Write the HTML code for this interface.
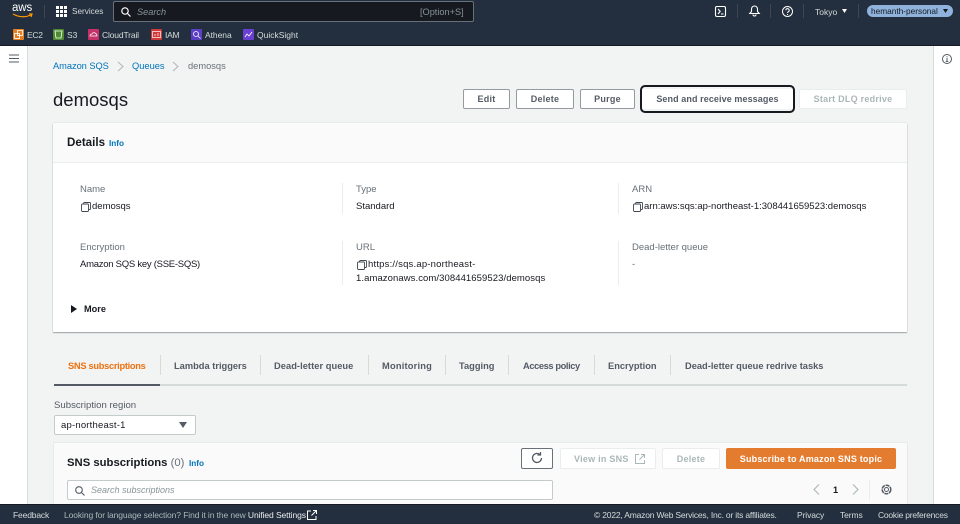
<!DOCTYPE html>
<html><head><meta charset="utf-8"><style>
html,body{margin:0;padding:0;width:960px;height:524px;overflow:hidden;background:#f2f3f3}
body{position:relative;font-family:"Liberation Sans",sans-serif;font-size:9px;color:#16191f}
#r{position:absolute;left:0;top:0;width:960px;height:524px;overflow:hidden;filter:blur(.3px)}
.a,.t{position:absolute}
.t{white-space:nowrap;line-height:12px}
.b{font-weight:700}
.g{color:#687078}.l{color:#0073bb}.w{color:#d5dbdb}
.v{font-size:9.500px}
.btn{position:absolute;box-sizing:border-box;border:1px solid #939ba0;border-radius:2px;background:#fff;color:#545b64;font-weight:700;font-size:9px;text-align:center;letter-spacing:.25px;white-space:nowrap}
.dis{border-color:#eaeded;color:#aab7b8}
.sep{position:absolute;width:1px;background:#d5dbdb}
.ic{position:absolute;width:11px;height:11px;border-radius:1px}
.tb{font-weight:700;font-size:9.300px;color:#545b64;top:360px}
svg{position:absolute;overflow:visible}
</style></head><body><div id="r">
<div class="a" style="left:0;top:0;width:960px;height:45px;background:#232f3e;border-bottom:1px solid #16191f"></div>
<div class="t" style="left:12px;top:2px;color:#fff;font-size:11.500px;letter-spacing:-.1px">aws</div>
<svg style="left:12px;top:13px" width="22" height="6" fill="none"><path d="M1 1q9 5 18 1M17 1l3 0-1 3" stroke="#f90" stroke-width="1.200"/></svg>
<div class="sep" style="left:44px;top:5px;height:13px;background:#414750"></div>
<svg style="left:56px;top:6px" width="11" height="11" fill="#fff"><rect width="3" height="3"/><rect x="4" width="3" height="3"/><rect x="8" width="3" height="3"/><rect y="4" width="3" height="3"/><rect x="4" y="4" width="3" height="3"/><rect x="8" y="4" width="3" height="3"/><rect y="8" width="3" height="3"/><rect x="4" y="8" width="3" height="3"/><rect x="8" y="8" width="3" height="3"/></svg>
<div class="t w" style="left:72px;top:6px;font-size:8.200px">Services</div>
<div class="a" style="left:113px;top:1px;width:359px;height:19px;background:#16191f;border:1px solid #687078;border-radius:2px"></div>
<svg style="left:121px;top:7px" width="10" height="10" fill="none" stroke="#fff" stroke-width="1.200"><circle cx="4" cy="4" r="3.200"/><path d="M6.500 6.500L9.500 9.500"/></svg>
<div class="t" style="left:137px;top:6px;color:#879596;font-style:italic;font-size:9.200px">Search</div>
<div class="t" style="left:420px;top:6px;color:#879596;font-size:9.200px">[Option+S]</div>

<div class="ic" style="left:13px;top:29px;background:#e67e22"></div>
<svg style="left:14px;top:30px" width="9" height="9" fill="none" stroke="#fff" stroke-width=".8"><rect x="3.500" y=".5" width="5" height="5"/><rect x=".5" y="3.500" width="5" height="5"/></svg>
<div class="t w" style="left:27px;top:29px;font-size:8.500px;letter-spacing:-.25px">EC2</div>
<div class="ic" style="left:53px;top:29px;background:#4d8b31"></div>
<svg style="left:54px;top:30px" width="9" height="9" fill="none" stroke="#fff" stroke-width=".8"><path d="M1 1h7l-1 7H2z"/></svg>
<div class="t w" style="left:67px;top:29px;font-size:8.500px">S3</div>
<div class="ic" style="left:88px;top:29px;background:#c7316a"></div>
<svg style="left:89px;top:30px" width="9" height="9" fill="none" stroke="#fff" stroke-width=".7"><path d="M1 6q0-2 2-2 1-2 3-1 2 1 2 3z"/></svg>
<div class="t w" style="left:102px;top:29px;font-size:8.500px;letter-spacing:-.15px">CloudTrail</div>
<div class="ic" style="left:151px;top:29px;background:#d13a3a"></div>
<svg style="left:152px;top:31px" width="9" height="7" fill="none" stroke="#fff" stroke-width=".7"><rect x=".5" y=".5" width="8" height="6"/><path d="M2 4h2M6 2v3"/></svg>
<div class="t w" style="left:165px;top:29px;font-size:8.500px;letter-spacing:-.25px">IAM</div>
<div class="ic" style="left:191px;top:29px;background:#5b3fc4"></div>
<svg style="left:192px;top:30px" width="9" height="9" fill="none" stroke="#fff" stroke-width=".8"><circle cx="4" cy="4" r="2.500"/><path d="M6 6l2.500 2.500"/></svg>
<div class="t w" style="left:205px;top:29px;font-size:8.500px;letter-spacing:-.05px">Athena</div>
<div class="ic" style="left:243px;top:29px;background:#6a3fd1"></div>
<svg style="left:244px;top:30px" width="9" height="9" fill="none" stroke="#fff" stroke-width=".8"><path d="M1 7l2-3 2 2 3-4"/></svg>
<div class="t w" style="left:257px;top:29px;font-size:8.500px">QuickSight</div>

<svg style="left:715px;top:6px" width="11" height="11" fill="none" stroke="#fff" stroke-width="1.100"><rect x=".5" y=".5" width="10" height="10" rx="1.500"/><path d="M3 3l2.200 2.400L3 8M6 8h2.500"/></svg>
<div class="sep" style="left:737px;top:4px;height:14px;background:#414750"></div>
<svg style="left:749px;top:5px" width="11" height="12" fill="none" stroke="#fff" stroke-width="1.100"><path d="M.8 8.500h9.400L8.500 6.500V4a3 3 0 0 0-6 0v2.500zM4 9.500a1.500 1.500 0 0 0 3 0"/></svg>
<div class="sep" style="left:770px;top:4px;height:14px;background:#414750"></div>
<svg style="left:782px;top:6px" width="11" height="11" fill="none" stroke="#fff" stroke-width="1"><circle cx="5.500" cy="5.500" r="5"/><path d="M3.800 4.300a1.700 1.700 0 1 1 2.500 1.500c-.6.300-.8.700-.8 1.200M5.500 8v1"/></svg>
<div class="sep" style="left:803px;top:4px;height:14px;background:#414750"></div>
<div class="t w" style="left:815px;top:6px;font-size:8.500px">Tokyo</div>
<svg style="left:842px;top:9px" width="5" height="4"><path d="M0 0h5L2.500 4z" fill="#fff"/></svg>
<div class="sep" style="left:858px;top:4px;height:14px;background:#414750"></div>
<div class="a" style="left:867px;top:5px;width:86px;height:12px;background:#8fb3dc;border-radius:6px"></div>
<div class="t" style="left:871px;top:5px;font-size:8.300px;color:#16191f">hemanth-personal</div>
<svg style="left:943px;top:9px" width="5" height="4"><path d="M0 0h5L2.500 4z" fill="#16191f"/></svg>

<div class="a" style="left:0;top:46px;width:27px;height:459px;background:#fff;border-right:1px solid #d5dbdb"></div>
<svg style="left:9px;top:54px" width="10" height="9" stroke="#545b64" stroke-width="1.100"><path d="M0 1h10M0 4.500h10M0 8h10"/></svg>
<div class="a" style="left:933px;top:46px;width:27px;height:459px;background:#fff;border-left:1px solid #d5dbdb;box-sizing:border-box"></div>
<svg style="left:942px;top:54px" width="10" height="10" fill="none" stroke="#545b64" stroke-width="1"><circle cx="5" cy="5" r="4.500"/><path d="M5 4v3.500M3.800 7.500h2.400M5 2.300v1"/></svg>

<div class="t l" style="left:53px;top:60px;font-size:9.300px;letter-spacing:-.05px">Amazon SQS</div>
<svg style="left:117px;top:61px" width="7" height="11" fill="none" stroke="#aab7b8"><path d="M1 1l5 4.500-5 4.500"/></svg>
<div class="t l" style="left:132px;top:60px;font-size:9.300px">Queues</div>
<svg style="left:172px;top:61px" width="7" height="11" fill="none" stroke="#aab7b8"><path d="M1 1l5 4.500-5 4.500"/></svg>
<div class="t" style="left:188px;top:60px;font-size:9.300px;color:#687078">demosqs</div>
<div class="t" style="left:53px;top:89px;font-size:18.500px;line-height:22px;color:#16191f">demosqs</div>

<div class="btn" style="left:463px;top:89px;width:47px;height:20px;line-height:19px">Edit</div>
<div class="btn" style="left:516px;top:89px;width:58px;height:20px;line-height:19px">Delete</div>
<div class="btn" style="left:580px;top:89px;width:55px;height:20px;line-height:19px">Purge</div>
<div class="a" style="left:640px;top:85px;width:155px;height:28px;border:2px solid #16191f;border-radius:5px;box-sizing:border-box"></div>
<div class="btn" style="left:642px;top:89px;width:151px;height:20px;line-height:19px;border-color:#fff;letter-spacing:.09px">Send and receive messages</div>
<div class="btn dis" style="left:799px;top:89px;width:108px;height:20px;line-height:19px">Start DLQ redrive</div>

<div class="a" style="left:53px;top:123px;width:854px;height:209px;background:#fff;box-shadow:0 1px 1px rgba(0,28,36,.35),0 0 1px rgba(0,28,36,.2)"></div>
<div class="a" style="left:53px;top:123px;width:854px;height:39px;background:#fafafa;border-bottom:1px solid #eaeded"></div>
<div class="t b" style="left:67px;top:136px;font-size:11.600px;line-height:14px">Details</div>
<div class="t b l" style="left:109px;top:138px;font-size:8.200px">Info</div>

<div class="sep" style="left:342px;top:183px;height:31px;background:#eaeded"></div>
<div class="sep" style="left:618px;top:183px;height:31px;background:#eaeded"></div>
<div class="sep" style="left:342px;top:241px;height:44px;background:#eaeded"></div>
<div class="sep" style="left:618px;top:241px;height:44px;background:#eaeded"></div>

<div class="t g v" style="left:80px;top:184px">Name</div>
<svg style="left:81px;top:202px" width="10" height="10" fill="#fff" stroke="#414750" stroke-width=".9"><rect x="2.500" y=".5" width="7" height="7" rx="1"/><rect x=".5" y="2" width="7" height="7.500" rx="1"/></svg>
<div class="t v" style="left:92px;top:201px">demosqs</div>
<div class="t g v" style="left:356px;top:184px">Type</div>
<div class="t v" style="left:356px;top:201px">Standard</div>
<div class="t g v" style="left:632px;top:184px">ARN</div>
<svg style="left:633px;top:202px" width="10" height="10" fill="#fff" stroke="#414750" stroke-width=".9"><rect x="2.500" y=".5" width="7" height="7" rx="1"/><rect x=".5" y="2" width="7" height="7.500" rx="1"/></svg>
<div class="t v" style="left:644px;top:201px">arn:aws:sqs:ap-northeast-1:308441659523:demosqs</div>

<div class="t g v" style="left:80px;top:242px">Encryption</div>
<div class="t v" style="left:80px;top:259px;letter-spacing:-.26px">Amazon SQS key (SSE-SQS)</div>
<div class="t g v" style="left:356px;top:242px">URL</div>
<svg style="left:357px;top:260px" width="10" height="10" fill="#fff" stroke="#414750" stroke-width=".9"><rect x="2.500" y=".5" width="7" height="7" rx="1"/><rect x=".5" y="2" width="7" height="7.500" rx="1"/></svg>
<div class="t v" style="left:368px;top:259px;letter-spacing:.2px">https://sqs.ap-northeast-</div>
<div class="t v" style="left:356px;top:273px;letter-spacing:.08px">1.amazonaws.com/308441659523/demosqs</div>
<div class="t g v" style="left:632px;top:242px">Dead-letter queue</div>
<div class="t g v" style="left:632px;top:259px">-</div>
<svg style="left:71px;top:305px" width="6" height="8"><path d="M0 0l6 4-6 4z" fill="#16191f"/></svg>
<div class="t b" style="left:84px;top:303px;font-size:9.200px;color:#16191f">More</div>

<div class="a" style="left:54px;top:384px;width:853px;height:2px;background:#d5dbdb"></div>
<div class="a" style="left:54px;top:383.500px;width:106px;height:2px;background:#545b64"></div>
<div class="t tb" style="left:68px;color:#ec7211;letter-spacing:-.3px">SNS subscriptions</div>
<div class="sep" style="left:160px;top:355px;height:20px"></div>
<div class="t tb" style="left:174px">Lambda triggers</div>
<div class="sep" style="left:260px;top:355px;height:20px"></div>
<div class="t tb" style="left:274px;letter-spacing:.05px">Dead-letter queue</div>
<div class="sep" style="left:368px;top:355px;height:20px"></div>
<div class="t tb" style="left:382px;letter-spacing:.2px">Monitoring</div>
<div class="sep" style="left:445px;top:355px;height:20px"></div>
<div class="t tb" style="left:459px">Tagging</div>
<div class="sep" style="left:508px;top:355px;height:20px"></div>
<div class="t tb" style="left:523px;letter-spacing:-.4px">Access policy</div>
<div class="sep" style="left:594px;top:355px;height:20px"></div>
<div class="t tb" style="left:608px">Encryption</div>
<div class="sep" style="left:670px;top:355px;height:20px"></div>
<div class="t tb" style="left:685px">Dead-letter queue redrive tasks</div>

<div class="t" style="left:54px;top:400px;font-size:9.600px;color:#545b64">Subscription region</div>
<div class="a" style="left:54px;top:415px;width:142px;height:20px;box-sizing:border-box;background:#fff;border:1px solid #c3cbcc;border-radius:2px"></div>
<div class="t" style="left:61px;top:420px;font-size:9.500px;letter-spacing:.2px">ap-northeast-1</div>
<svg style="left:179px;top:422px" width="8" height="6"><path d="M0 0h8L4 6z" fill="#545b64"/></svg>

<div class="a" style="left:54px;top:443px;width:853px;height:62px;background:#fafafa;box-shadow:0 0 1px rgba(0,28,36,.2)"></div>
<div class="t b" style="left:67px;top:456px;font-size:11.300px;line-height:14px">SNS subscriptions <span style="font-weight:400;color:#687078">(0)</span></div>
<div class="t b l" style="left:189px;top:458px;font-size:8.200px">Info</div>
<div class="btn" style="left:521px;top:448px;width:32px;height:21px;border-color:#687078"></div>
<svg style="left:531px;top:452px" width="12" height="12" fill="none" stroke="#545b64" stroke-width="1.300"><path d="M10.500 6a4.500 4.500 0 1 1-1.500-3.400M9.500 0v3h-3"/></svg>
<div class="btn dis" style="left:560px;top:448px;width:96px;height:21px;line-height:20px;text-align:left;padding-left:13px">View in SNS</div>
<svg style="left:635px;top:454px" width="10" height="10" fill="none" stroke="#aab7b8"><path d="M4 .5H.5v9h9V6M6 .5h3.500V4M9.500.5L4.500 5.500"/></svg>
<div class="btn dis" style="left:662px;top:448px;width:58px;height:21px;line-height:20px">Delete</div>
<div class="btn" style="left:726px;top:448px;width:170px;height:21px;line-height:20px;background:#e47c30;border-color:#e47c30;color:#fff;letter-spacing:.2px">Subscribe to Amazon SNS topic</div>
<div class="a" style="left:67px;top:480px;width:486px;height:20px;box-sizing:border-box;background:#fff;border:1px solid #c3cbcc;border-radius:2px"></div>
<svg style="left:75px;top:486px" width="10" height="10" fill="none" stroke="#545b64" stroke-width="1.100"><circle cx="4" cy="4" r="3.300"/><path d="M6.500 6.500L9.500 9.500"/></svg>
<div class="t" style="left:91px;top:484px;font-size:9px;font-style:italic;color:#879596">Search subscriptions</div>
<svg style="left:813px;top:484px" width="7" height="11" fill="none" stroke="#aab7b8" stroke-width="1.100"><path d="M6 .5L1 5.500l5 5"/></svg>
<div class="t b" style="left:833px;top:484px;font-size:9.200px">1</div>
<svg style="left:852px;top:484px" width="7" height="11" fill="none" stroke="#aab7b8" stroke-width="1.100"><path d="M1 .5l5 5-5 5"/></svg>
<div class="sep" style="left:869px;top:480px;height:20px;background:#eaeded"></div>
<svg style="left:881px;top:484px" width="11" height="11" fill="none" stroke="#545b64"><circle cx="5.500" cy="5.500" r="2"/><circle cx="5.500" cy="5.500" r="4.300" stroke-width="1.500" stroke-dasharray="4 .8"/></svg>

<div class="a" style="left:0;top:504px;width:960px;height:20px;background:#232f3e;border-top:1px solid #16191f;box-sizing:border-box"></div>
<div class="t w" style="left:13px;top:509px;font-size:8.500px;letter-spacing:-.15px">Feedback</div>
<div class="t" style="left:64px;top:509px;font-size:8.500px;letter-spacing:-.1px;color:#aab7b8">Looking for language selection? Find it in the new <span style="color:#eaeded">Unified Settings</span></div>
<svg style="left:307px;top:510px" width="10" height="10" fill="none" stroke="#fff"><path d="M4 1H.5v8.500H9V6M6 .5h3.500V4M9.500.5L4.500 5.500"/></svg>
<div class="t w" style="left:594px;top:509px;font-size:8.500px;letter-spacing:-.19px">© 2022, Amazon Web Services, Inc. or its affiliates.</div>
<div class="t w" style="left:797px;top:509px;font-size:8.500px;letter-spacing:-.1px">Privacy</div>
<div class="t w" style="left:840px;top:509px;font-size:8.500px;letter-spacing:-.1px">Terms</div>
<div class="t w" style="left:878px;top:509px;font-size:8.500px;letter-spacing:-.22px">Cookie preferences</div>
</div></body></html>
